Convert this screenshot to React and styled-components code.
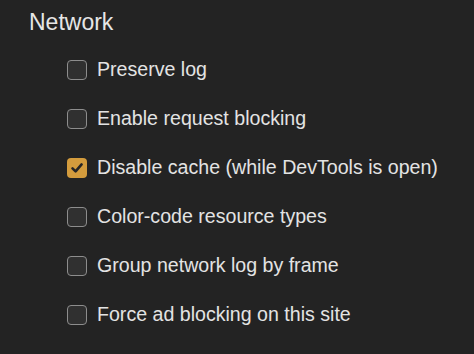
import React from "react";
import styled, { createGlobalStyle } from "styled-components";

const Global = createGlobalStyle`
  html, body { margin: 0; padding: 0; background: #232323; }
  body { font-family: "Liberation Sans", Arial, sans-serif; }
`;

const Page = styled.div`
  width: 474px;
  height: 354px;
  background: #232323;
  padding: 8px 0 0 29px;
  box-sizing: border-box;
  overflow: hidden;
`;

const Title = styled.h2`
  margin: 0;
  font-size: 23px;
  line-height: 28px;
  font-weight: 400;
  color: #e6e6e6;
`;

const List = styled.div`
  display: flex;
  flex-direction: column;
  margin-top: 9px;
  padding-left: 38px;
`;

const Row = styled.label`
  display: flex;
  align-items: center;
  gap: 10px;
  height: 49px;
  font-size: 19.6px;
  color: #e3e3e3;
  white-space: nowrap;
`;

const Box = styled.span`
  width: 20px;
  height: 20px;
  box-sizing: border-box;
  border-radius: 4px;
  border: ${(p) => (p.$checked ? "none" : "1.5px solid #8d8d8d")};
  background: ${(p) => (p.$checked ? "#d49c3d" : "#303030")};
  display: flex;
  align-items: center;
  justify-content: center;
  flex: none;
`;

const items = [
  ["Preserve log", false],
  ["Enable request blocking", false],
  ["Disable cache (while DevTools is open)", true],
  ["Color-code resource types", false],
  ["Group network log by frame", false],
  ["Force ad blocking on this site", false],
];

export default function App() {
  return (
    <>
      <Global />
      <Page>
        <Title>Network</Title>
        <List>
          {items.map(([label, checked]) => (
            <Row key={label}>
              <Box $checked={checked}>
                {checked && (
                  <svg width="14" height="14" viewBox="0 0 14 14">
                    <path
                      d="M2.5 7.3 L5.6 10.4 L11.6 3.4"
                      fill="none"
                      stroke="#262626"
                      strokeWidth="2.6"
                      strokeLinecap="round"
                      strokeLinejoin="round"
                    />
                  </svg>
                )}
              </Box>
              {label}
            </Row>
          ))}
        </List>
      </Page>
    </>
  );
}
